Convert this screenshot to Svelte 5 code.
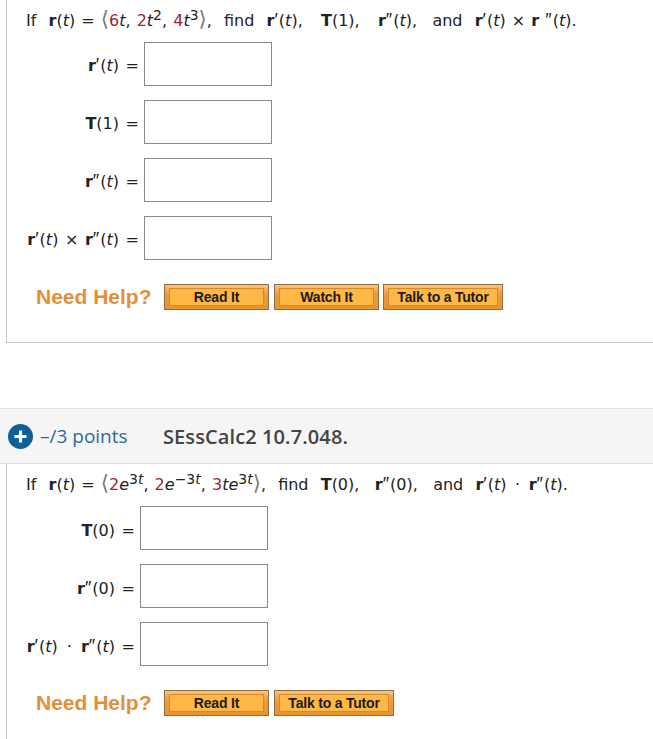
<script lang="ts">
	const first = [
		{ id: 'a', bold: 'r', mark: '′', rest: '(', t: true },
		{ id: 'b', bold: 'T', mark: '', rest: '(1', t: false },
		{ id: 'c', bold: 'r', mark: '″', rest: '(', t: true }
	];
	const second = [
		{ id: 'd', bold: 'T', mark: '', rest: '(0', t: false },
		{ id: 'e', bold: 'r', mark: '″', rest: '(0', t: false }
	];
</script>

{#snippet help(labels)}
	<div class="help">
		<span class="need">Need Help?</span>
		{#each labels as label}
			<button class="orange" class:wide={label === 'Talk to a Tutor'}><span>{label}</span></button>
		{/each}
	</div>
{/snippet}

<div class="page">
	<section class="card first">
		<p class="prompt">
			If&nbsp; <b>r</b>(<i>t</i>) = <span class="ang">⟨</span><span class="red">6</span><i>t</i>, <span class="red">2</span><i>t</i><sup>2</sup>, <span class="red">4</span><i>t</i><sup>3</sup><span class="ang">⟩</span>,&nbsp; find&nbsp; <b>r</b><span class="pr">′</span>(<i>t</i>),&nbsp;&nbsp; <b>T</b>(1),&nbsp;&nbsp; <b>r</b><span class="pr">″</span>(<i>t</i>),&thinsp;&nbsp; and&nbsp; <b>r</b><span class="pr">′</span>(<i>t</i>) × <b>r</b> <span class="pr">″</span>(<i>t</i>).
		</p>
		<div class="rows">
			{#each first as row (row.id)}
				<div class="row">
					<div class="label"><b>{row.bold}</b><span class="pr">{row.mark}</span>{row.rest}{#if row.t}<i>t</i>{/if}) =</div>
					<div class="answer"></div>
				</div>
			{/each}
			<div class="row">
				<div class="label"><b>r</b><span class="pr">′</span>(<i>t</i>) × <b>r</b><span class="pr">″</span>(<i>t</i>) =</div>
				<div class="answer"></div>
			</div>
		</div>
		{@render help(['Read It', 'Watch It', 'Talk to a Tutor'])}
	</section>

	<header class="qhead">
		<span class="plus">
			<svg width="25" height="25" viewBox="0 0 25 25">
				<circle cx="12.5" cy="12.5" r="12.5" fill="#0f6096" />
				<path d="M12.5 6.5v12M6.5 12.5h12" stroke="#fff" stroke-width="3.2" />
			</svg>
		</span>
		<span class="points">–/3 points</span>
		<span class="ref">SEssCalc2 10.7.048.</span>
	</header>

	<section class="card second">
		<p class="prompt">
			If&nbsp; <b>r</b>(<i>t</i>) = <span class="ang">⟨</span><span class="red">2</span><i>e</i><sup>3<i>t</i></sup>, <span class="red">2</span><i>e</i><sup>−3<i>t</i></sup>, <span class="red">3</span><i>te</i><sup>3<i>t</i></sup><span class="ang">⟩</span>,&nbsp; find&nbsp; <b>T</b>(0),&thinsp;&nbsp; <b>r</b><span class="pr">″</span>(0),&thinsp;&nbsp; and&nbsp; <b>r</b><span class="pr">′</span>(<i>t</i>) <span class="dot">·</span> <b>r</b><span class="pr">″</span>(<i>t</i>).
		</p>
		<div class="rows">
			{#each second as row (row.id)}
				<div class="row">
					<div class="label"><b>{row.bold}</b><span class="pr">{row.mark}</span>{row.rest}) =</div>
					<div class="answer"></div>
				</div>
			{/each}
			<div class="row">
				<div class="label"><b>r</b><span class="pr">′</span>(<i>t</i>) <span class="dot">·</span> <b>r</b><span class="pr">″</span>(<i>t</i>) =</div>
				<div class="answer"></div>
			</div>
		</div>
		{@render help(['Read It', 'Talk to a Tutor'])}
	</section>
</div>

<style>
	:global(body) {
		margin: 0;
		background: #fff;
	}
	.page {
		width: 653px;
		height: 739px;
		overflow: hidden;
		font-family: 'DejaVu Sans', Verdana, sans-serif;
		font-size: 16px;
		color: #222;
	}
	.card {
		margin-left: 6px;
		border-left: 1px solid #c8c8c8;
		padding-left: 19px;
	}
	.card.first {
		height: 342px;
		border-bottom: 1px solid #c8c8c8;
	}
	.card.second {
		height: 275px;
	}
	.prompt {
		margin: 0;
		height: 42px;
		line-height: 40px;
		white-space: nowrap;
		font-size: 16px;
		word-spacing: 1px;
	}
	.pr {
		font-family: 'Liberation Sans', sans-serif;
		font-size: 18px;
		letter-spacing: 1px;
	}
	.dot {
		margin: 0 2.5px;
	}
	sup {
		font-size: 14px;
		line-height: 0;
	}
	.red {
		color: #a3242f;
	}
	.ang {
		color: #777;
		font-size: 21px;
		line-height: 0;
	}
	.rows {
		display: flex;
		flex-direction: column;
		gap: 14px;
	}
	.row {
		display: flex;
		align-items: center;
		gap: 5px;
	}
	.label {
		width: 113px;
		text-align: right;
		white-space: nowrap;
		padding-top: 3px;
		word-spacing: 1.5px;
	}
	.second .label {
		width: 109px;
		padding-top: 4px;
	}
	.answer {
		width: 126px;
		height: 42px;
		border: 1px solid #888;
		background: #fff;
		flex: none;
	}
	.help {
		display: flex;
		align-items: center;
		margin-top: 24px;
		margin-left: 10px;
		height: 26px;
	}
	.need {
		width: 128px;
		flex: none;
		font-family: 'Liberation Sans', Arial, sans-serif;
		font-weight: 700;
		font-size: 21px;
		color: #e38f3a;
		white-space: nowrap;
	}
	.orange {
		width: 105px;
		height: 26px;
		margin: 0 5px 0 0;
		padding: 3px 4px;
		box-sizing: border-box;
		border: 1px solid #8f6f40;
		background: linear-gradient(#f8c388, #f09c3c 35%, #e8912f);
		font-family: 'Liberation Sans', Arial, sans-serif;
		font-weight: 700;
		font-size: 14px;
		letter-spacing: -0.2px;
		color: #1c1c1c;
	}
	.orange + .orange {
		margin-right: 4px;
	}
	.orange.wide {
		width: 120px;
	}
	.orange span {
		display: block;
		height: 18px;
		line-height: 17px;
		box-sizing: border-box;
		border: 1px solid #d58a2c;
		background: #ffb745;
		white-space: nowrap;
	}
	.qhead {
		display: flex;
		align-items: center;
		height: 54px;
		margin-top: 65px;
		background: #f5f5f5;
		border-top: 1px solid #e2e2e2;
		border-bottom: 1px solid #dcdcdc;
		padding-left: 8px;
		font-family: 'Open Sans', sans-serif;
		font-size: 19px;
	}
	.plus {
		display: flex;
		width: 32px;
		flex: none;
	}
	.points {
		width: 123px;
		flex: none;
		color: #2f6a94;
	}
	.ref {
		font-weight: 600;
		font-size: 20px;
		letter-spacing: 0.1px;
		color: #444;
	}
</style>
